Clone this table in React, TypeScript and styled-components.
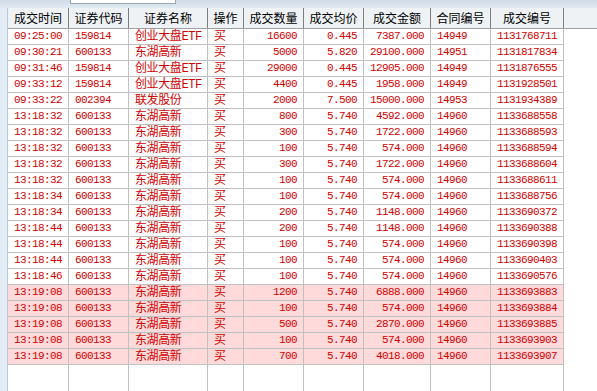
import styled, { createGlobalStyle } from "styled-components"

const GlobalStyle = createGlobalStyle`
  html, body {
    margin: 0;
    padding: 0;
    background: #fff;
  }
`

const columns = [
  { title: '成交时间', width: 61, align: 'left' },
  { title: '证券代码', width: 60, align: 'left' },
  { title: '证券名称', width: 79, align: 'left', cjk: true },
  { title: '操作', width: 36, align: 'left', cjk: true },
  { title: '成交数量', width: 60, align: 'right' },
  { title: '成交均价', width: 60, align: 'right' },
  { title: '成交金额', width: 67, align: 'right' },
  { title: '合同编号', width: 60, align: 'left' },
  { title: '成交编号', width: 73, align: 'left' },
]

const rows = [
  ['09:25:00', '159814', '创业大盘ETF', '买', '16600', '0.445', '7387.000', '14949', '1131768711'],
  ['09:30:21', '600133', '东湖高新', '买', '5000', '5.820', '29100.000', '14951', '1131817834'],
  ['09:31:46', '159814', '创业大盘ETF', '买', '29000', '0.445', '12905.000', '14949', '1131876555'],
  ['09:33:12', '159814', '创业大盘ETF', '买', '4400', '0.445', '1958.000', '14949', '1131928501'],
  ['09:33:22', '002394', '联发股份', '买', '2000', '7.500', '15000.000', '14953', '1131934389'],
  ['13:18:32', '600133', '东湖高新', '买', '800', '5.740', '4592.000', '14960', '1133688558'],
  ['13:18:32', '600133', '东湖高新', '买', '300', '5.740', '1722.000', '14960', '1133688593'],
  ['13:18:32', '600133', '东湖高新', '买', '100', '5.740', '574.000', '14960', '1133688594'],
  ['13:18:32', '600133', '东湖高新', '买', '300', '5.740', '1722.000', '14960', '1133688604'],
  ['13:18:32', '600133', '东湖高新', '买', '100', '5.740', '574.000', '14960', '1133688611'],
  ['13:18:34', '600133', '东湖高新', '买', '100', '5.740', '574.000', '14960', '1133688756'],
  ['13:18:34', '600133', '东湖高新', '买', '200', '5.740', '1148.000', '14960', '1133690372'],
  ['13:18:44', '600133', '东湖高新', '买', '200', '5.740', '1148.000', '14960', '1133690388'],
  ['13:18:44', '600133', '东湖高新', '买', '100', '5.740', '574.000', '14960', '1133690398'],
  ['13:18:44', '600133', '东湖高新', '买', '100', '5.740', '574.000', '14960', '1133690403'],
  ['13:18:46', '600133', '东湖高新', '买', '100', '5.740', '574.000', '14960', '1133690576'],
  ['13:19:08', '600133', '东湖高新', '买', '1200', '5.740', '6888.000', '14960', '1133693883'],
  ['13:19:08', '600133', '东湖高新', '买', '100', '5.740', '574.000', '14960', '1133693884'],
  ['13:19:08', '600133', '东湖高新', '买', '500', '5.740', '2870.000', '14960', '1133693885'],
  ['13:19:08', '600133', '东湖高新', '买', '100', '5.740', '574.000', '14960', '1133693903'],
  ['13:19:08', '600133', '东湖高新', '买', '700', '5.740', '4018.000', '14960', '1133693907'],
]

// last five fills are highlighted
const PINK_FROM = 16

const App = () => {
  return (
    <Page>
      <GlobalStyle />
      <TopStrip>
        <SearchBox />
      </TopStrip>
      <Main>
        <SideBar />
        <Grid>
          <HeaderRow>
            {columns.map((col, i) => (
              <HeaderCell key={i} $w={col.width}>{col.title}</HeaderCell>
            ))}
          </HeaderRow>
          {rows.map((row, r) => (
            <Row key={r} $pink={r >= PINK_FROM}>
              {row.map((value, c) => (
                <Cell
                  key={c}
                  $w={columns[c].width}
                  $align={columns[c].align}
                  $cjk={!!columns[c].cjk}
                >
                  {value}
                </Cell>
              ))}
            </Row>
          ))}
          <FillerRow>
            {columns.map((col, i) => (
              <FillerCell key={i} $w={col.width} />
            ))}
          </FillerRow>
        </Grid>
      </Main>
    </Page>
  )
}

const Page = styled.div`
  width: 597px;
  height: 391px;
  overflow: hidden;
  display: flex;
  flex-direction: column;
  background: #fff;
`

const TopStrip = styled.div`
  height: 8px;
  flex-shrink: 0;
  background: linear-gradient(#cddbe8, #e1eaf2);
  position: relative;
`

const SearchBox = styled.div`
  position: absolute;
  left: 70px;
  top: 0;
  width: 104px;
  height: 3px;
  background: #fff;
  border: 1px solid #9aa6b2;
  border-top: none;
`

const Main = styled.div`
  flex: 1;
  display: flex;
  min-height: 0;
`

const SideBar = styled.div`
  width: 7px;
  flex-shrink: 0;
  background: #e4edf6;
  border-right: 1px solid #b9c9d9;
`

const Grid = styled.div`
  flex: 1;
  display: flex;
  flex-direction: column;
  min-width: 0;
`

const HeaderRow = styled.div`
  display: flex;
  height: 20px;
  flex-shrink: 0;
  background: #eef2f5;
  border-bottom: 1px solid #a0a0a0;
`

const HeaderCell = styled.div<{ $w: number }>`
  width: ${p => p.$w}px;
  box-sizing: border-box;
  flex-shrink: 0;
  border-right: 1px solid #7d7d7d;
  font-family: "Noto Sans CJK SC", sans-serif;
  font-size: 12px;
  line-height: 20px;
  color: #000;
  text-align: center;
  white-space: nowrap;
`

const Row = styled.div<{ $pink: boolean }>`
  display: flex;
  height: 15px;
  flex-shrink: 0;
  width: 556px;
  background: ${p => (p.$pink ? '#ffdadb' : '#fff')};
  border-bottom: 1px solid #c0c0c0;
`

const Cell = styled.div<{ $w: number; $align: string; $cjk: boolean }>`
  width: ${p => p.$w}px;
  box-sizing: border-box;
  flex-shrink: 0;
  border-right: 1px solid #c0c0c0;
  padding: ${p => (p.$cjk ? '1px 6px 0' : '0 6px')};
  text-align: ${p => p.$align};
  font-family: "Liberation Mono", "Noto Sans CJK SC", monospace;
  font-size: ${p => (p.$cjk ? 12 : 11)}px;
  letter-spacing: ${p => (p.$cjk ? -0.4 : -0.6)}px;
  line-height: ${p => (p.$cjk ? 14 : 15)}px;
  color: #d20000;
  white-space: nowrap;
  overflow: hidden;
`

const FillerRow = styled.div`
  flex: 1;
  display: flex;
  width: 556px;
`

const FillerCell = styled.div<{ $w: number }>`
  width: ${p => p.$w}px;
  box-sizing: border-box;
  flex-shrink: 0;
  border-right: 1px solid #c0c0c0;
`

export default App
